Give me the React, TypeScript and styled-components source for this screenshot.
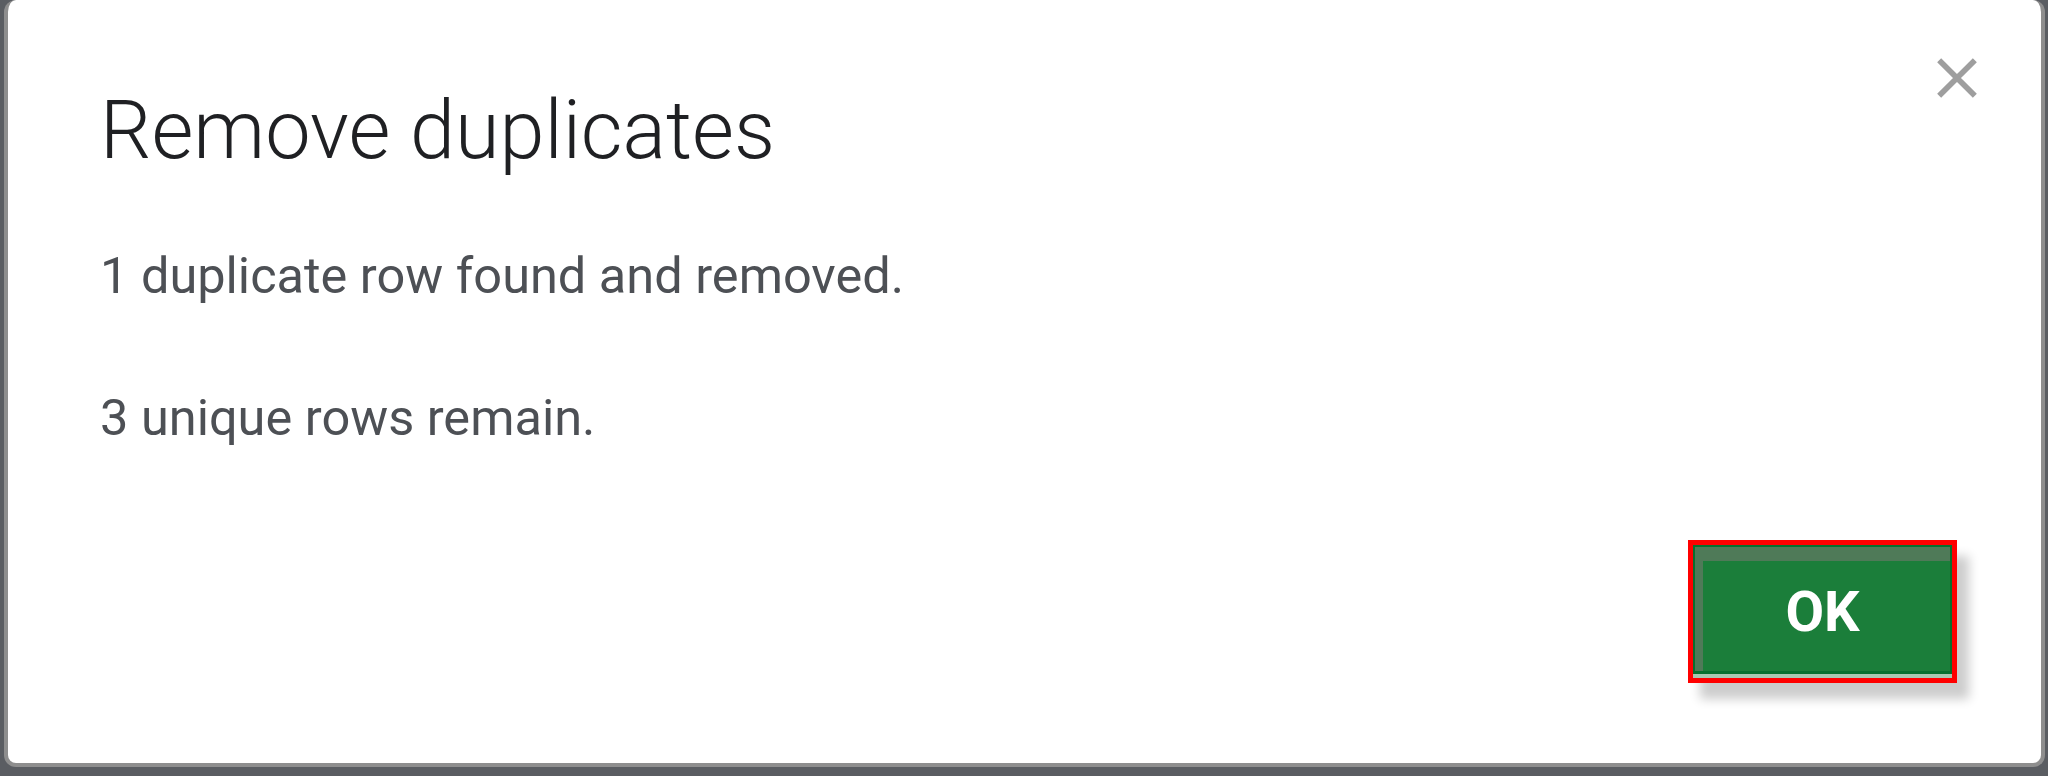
import styled, { createGlobalStyle } from "styled-components";

const GlobalStyle = createGlobalStyle`
  html, body {
    margin: 0;
    padding: 0;
    background: #5a5d62;
  }
  body {
    font-family: Roboto, "Liberation Sans", Arial, sans-serif;
  }
`;

const Backdrop = styled.div`
  display: flex;
  width: 2048px;
  height: 776px;
  box-sizing: border-box;
  padding: 0 3px 9px 4px;
  background: #5a5d62;
`;

const Dialog = styled.section`
  flex: 1;
  display: flex;
  flex-direction: column;
  box-sizing: border-box;
  padding: 44px 50px 0 92px;
  background: #ffffff;
  border: 4px solid #8e8e8e;
  border-top: none;
  border-radius: 12px;
`;

const Header = styled.header`
  display: flex;
  justify-content: space-between;
  align-items: flex-start;
`;

const Title = styled.h1`
  margin: 41px 0 0;
  font-size: 81px;
  line-height: 92px;
  font-weight: 300;
  color: #1f2023;
`;

const CloseButton = styled.button`
  display: flex;
  padding: 0;
  border: none;
  background: none;
  cursor: pointer;
`;

const Body = styled.div`
  display: flex;
  flex-direction: column;
  gap: 82px;
  margin-top: 69px;
`;

const Message = styled.p`
  margin: 0;
  font-size: 50.5px;
  line-height: 60px;
  color: #4d5055;
`;

const Footer = styled.footer`
  display: flex;
  justify-content: flex-end;
  margin-top: auto;
  padding: 0 34px 80px 0;
`;

const OkButton = styled.button`
  width: 269px;
  height: 143px;
  box-sizing: border-box;
  border: 5px solid #ff0000;
  background: #1b7e3a;
  color: #ffffff;
  font-family: Roboto, "Liberation Sans", Arial, sans-serif;
  font-size: 56px;
  font-weight: 700;
  cursor: pointer;
  box-shadow:
    inset 0 -4px 0 #a9c8b1,
    inset 0 -7px 0 #07702f,
    inset 0 0 0 2px #07702f,
    inset 10px 16px 0 #4f7a58,
    12px 16px 10px rgba(0, 0, 0, 0.2);
`;

const CloseIcon = () => (
  <svg width="68" height="68" viewBox="0 0 24 24" fill="#9e9e9e">
    <path d="M19 6.41L17.59 5 12 10.59 6.41 5 5 6.41 10.59 12 5 17.59 6.41 19 12 13.41 17.59 19 19 17.59 13.41 12z" />
  </svg>
);

const App = () => {
  return (
    <>
      <GlobalStyle />
      <Backdrop>
        <Dialog>
          <Header>
            <Title>Remove duplicates</Title>
            <CloseButton aria-label="Close">
              <CloseIcon />
            </CloseButton>
          </Header>
          <Body>
            <Message>1 duplicate row found and removed.</Message>
            <Message>3 unique rows remain.</Message>
          </Body>
          <Footer>
            <OkButton>OK</OkButton>
          </Footer>
        </Dialog>
      </Backdrop>
    </>
  );
};

export default App;
